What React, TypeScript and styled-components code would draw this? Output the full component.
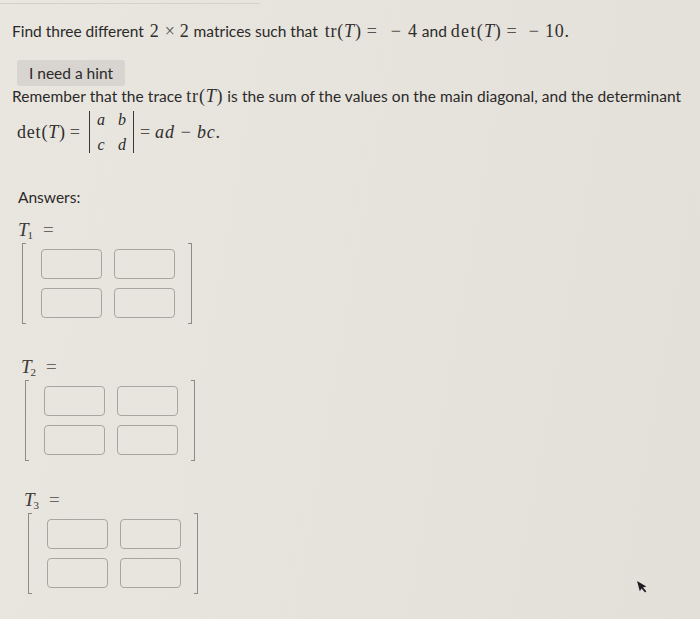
import React from 'react'
import styled, { createGlobalStyle } from 'styled-components'

const Global = createGlobalStyle`
  html, body {
    margin: 0;
    padding: 0;
    background: #e6e2dc;
  }
  body {
    font-family: Lato, "Open Sans", sans-serif;
    color: #2b2a29;
  }
`

const Page = styled.div`
  position: relative;
  width: 700px;
  height: 619px;
  overflow: hidden;
  box-sizing: border-box;
  padding: 0 0 0 12px;
  background: linear-gradient(100deg, #e9e6e0 0%, #e6e2dc 55%, #e3dfd9 100%);
`

const TopRule = styled.div`
  width: 260px;
  height: 1px;
  margin: 3px 0 0 -12px;
  background: #d4d0ca;
`

const Question = styled.p`
  margin: 17px 0 0;
  font-size: 15.5px;
  line-height: 20px;
  white-space: nowrap;
`

const M = styled.span<{ italic?: boolean; wide?: boolean }>`
  font-family: "Liberation Serif", "DejaVu Serif", serif;
  font-style: ${p => (p.italic ? 'italic' : 'normal')};
  font-size: 18px;
  letter-spacing: ${p => (p.wide ? 1.3 : 0.8)}px;
  color: #2f2e2d;
`

const Op = styled.span<{ l?: number; r?: number }>`
  font-family: "Liberation Serif", serif;
  font-size: 18px;
  color: #55524f;
  margin: 0 ${p => p.r ?? 6}px 0 ${p => p.l ?? 6}px;
`

const HintButton = styled.button`
  display: block;
  margin: 19px 0 0 5px;
  width: 108px;
  height: 26px;
  border: none;
  border-radius: 3px;
  background: #d8d4cf;
  font-family: Lato, sans-serif;
  font-size: 15.5px;
  color: #2b2a29;
  padding: 0;
`

const HintText = styled.p`
  margin: 1px 0 0;
  font-size: 15.5px;
  line-height: 18px;
  letter-spacing: 0.05px;
  white-space: nowrap;
`

const DetLine = styled.div`
  display: flex;
  align-items: center;
  margin: 6px 0 0 5px;
  height: 42px;
`

const Det = styled.div`
  display: grid;
  grid-template-columns: 12px 12px;
  column-gap: 9px;
  row-gap: 8px;
  margin: 0 6px 0 9px;
  padding: 0 5px;
  border-left: 1px solid #3a3938;
  border-right: 1px solid #3a3938;
  font-family: "Liberation Serif", serif;
  font-style: italic;
  font-size: 16px;
  line-height: 17px;
  text-align: center;
`

const Label = styled.div`
  margin: 34px 0 0 6px;
  font-size: 15.5px;
  line-height: 20px;
`

const Block = styled.div<{ shift: number; top: number }>`
  margin: ${p => p.top}px 0 0 ${p => p.shift}px;
`

const Name = styled.div`
  height: 18px;
  line-height: 18px;
  font-family: "Liberation Serif", serif;
  font-size: 19px;
  color: #3d3b39;
  i {
    font-style: italic;
  }
  sub {
    font-size: 11px;
    vertical-align: -3px;
    line-height: 0;
    margin-left: -1px;
  }
`

const Equals = styled.span`
  margin-left: 10px;
  color: #6a6763;
`

const Matrix = styled.div`
  display: flex;
  align-items: center;
  margin: 4px 0 0 4px;
`

const Bracket = styled.div<{ side: 'left' | 'right' }>`
  width: 4px;
  height: 81px;
  box-sizing: border-box;
  border: 1.5px solid #8e8b87;
  ${p => (p.side === 'left' ? 'border-right: none;' : 'border-left: none;')}
`

const Cells = styled.div`
  display: grid;
  grid-template-columns: 61px 61px;
  grid-template-rows: 30px 30px;
  column-gap: 12px;
  row-gap: 9px;
  margin: 0 13px 0 15px;
`

const Cell = styled.input`
  box-sizing: border-box;
  width: 61px;
  height: 30px;
  border: 1.5px solid #a9a5a0;
  border-radius: 4px;
  background: #e8e4de;
  outline: none;
`

const Cursor = styled.svg`
  position: absolute;
  left: 637px;
  top: 579px;
`

const MatrixAnswer = ({ n, shift, top }: { n: number; shift: number; top: number }) => (
  <Block shift={shift} top={top}>
    <Name>
      <i>T</i>
      <sub>{n}</sub>
      <Equals>=</Equals>
    </Name>
    <Matrix>
      <Bracket side="left" />
      <Cells>
        <Cell />
        <Cell />
        <Cell />
        <Cell />
      </Cells>
      <Bracket side="right" />
    </Matrix>
  </Block>
)

export default function App() {
  return (
    <>
      <Global />
      <Page>
        <TopRule />
        <Question>
          Find three different <M style={{ marginLeft: 2 }}>2</M>
          <Op l={5} r={5}>×</Op>
          <M>2</M> matrices such that <M style={{ marginLeft: 3 }}>tr(</M>
          <M italic>T</M>
          <M>)</M>
          <Op l={5} r={14}>=</Op>
          <Op l={0} r={7}>−</Op>
          <M>4</M> and <M wide>det(</M>
          <M italic>T</M>
          <M>)</M>
          <Op l={5} r={12}>=</Op>
          <Op l={0} r={6}>−</Op>
          <M>10.</M>
        </Question>
        <HintButton>I need a hint</HintButton>
        <HintText>
          Remember that the trace <M>tr(</M>
          <M italic>T</M>
          <M>)</M> is the sum of the values on the main diagonal, and the determinant
        </HintText>
        <DetLine>
          <M>det(</M>
          <M italic>T</M>
          <M>)</M>
          <Op l={4} r={0}>=</Op>
          <Det>
            <span>a</span>
            <span>b</span>
            <span>c</span>
            <span>d</span>
          </Det>
          <Op l={0} r={0}>=</Op>
          <M italic style={{ marginLeft: 5 }}>ad</M>
          <Op l={6} r={6}>−</Op>
          <M italic>bc</M>
          <M>.</M>
        </DetLine>
        <Label>Answers:</Label>
        <MatrixAnswer n={1} shift={6} top={14} />
        <MatrixAnswer n={2} shift={9} top={34} />
        <MatrixAnswer n={3} shift={12} top={30} />
        <Cursor width="10" height="15" viewBox="0 0 10 15">
          <path d="M1.5 1 L1.5 11.5 L4 9.2 L6.3 14 L7.8 13.3 L5.6 8.6 L9 8.6 Z" fill="#1e1d22" transform="rotate(-15 5 7)" />
        </Cursor>
      </Page>
    </>
  )
}
